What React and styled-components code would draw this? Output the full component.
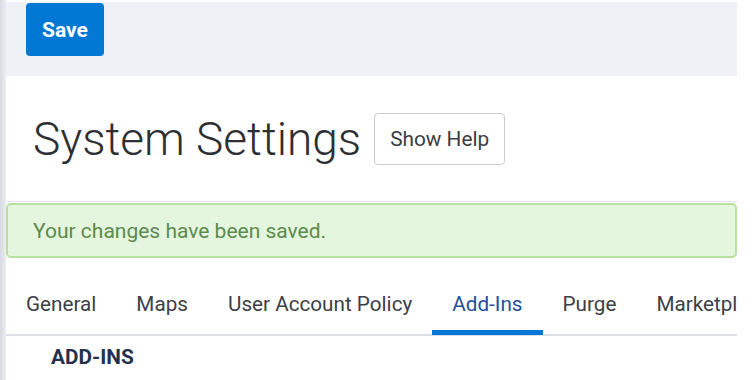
import React from 'react';
import styled, { createGlobalStyle } from 'styled-components';

const GlobalStyle = createGlobalStyle`
  body {
    margin: 0;
    background: #fff;
    font-family: Roboto, "Liberation Sans", sans-serif;
  }
`;

const Page = styled.div`
  display: flex;
  width: 755px;
  height: 380px;
  overflow: hidden;
`;

const SideEdge = styled.div`
  flex: 0 0 6px;
  background: linear-gradient(to right, #d6d9df, #eceef2);
`;

const Main = styled.div`
  width: 731px;
  display: flex;
  flex-direction: column;
  overflow: hidden;
`;

const Toolbar = styled.div`
  margin-top: 2px;
  height: 74px;
  background: #eef1f6;
  padding: 1px 0 0 20px;
  box-sizing: border-box;
`;

const PrimaryButton = styled.button`
  width: 78px;
  height: 53px;
  border: none;
  border-radius: 4px;
  background: #0078d4;
  color: #fff;
  font-family: Roboto, "Liberation Sans", sans-serif;
  font-weight: 700;
  font-size: 21px;
`;

const TitleRow = styled.div`
  display: flex;
  align-items: center;
  gap: 13px;
  height: 126px;
  padding-left: 27px;
  padding-top: 1px;
  box-sizing: border-box;
  border-bottom: 1px solid #e3e5e9;
`;

const Title = styled.h1`
  margin: 0;
  font-size: 46px;
  font-weight: 300;
  color: #2d2f33;
  line-height: 1;
`;

const OutlineButton = styled.button`
  width: 131px;
  height: 52px;
  background: #fff;
  border: 1px solid #c9ccd1;
  border-radius: 4px;
  font-family: Roboto, "Liberation Sans", sans-serif;
  font-size: 20.8px;
  color: #3a3d42;
`;

const Alert = styled.div`
  margin-top: 1px;
  height: 55px;
  box-sizing: border-box;
  background: #e4f6dd;
  border: 2px solid #b7e1a1;
  border-radius: 5px;
  padding-left: 25px;
  display: flex;
  align-items: center;
  font-size: 21px;
  color: #5c8a4e;
`;

const Tabs = styled.div`
  margin-top: 20px;
  display: flex;
  border-bottom: 2px solid #dde1e6;
`;

const Tab = styled.div`
  padding: 0 20px;
  height: 52px;
  display: flex;
  align-items: center;
  font-size: 20.7px;
  color: ${p => (p.$active ? '#24509b' : '#3d4046')};
  border-bottom: 5px solid ${p => (p.$active ? '#0078d4' : 'transparent')};
  margin-bottom: -1px;
  white-space: nowrap;
`;

const SectionTitle = styled.h2`
  margin: 9px 0 0 45px;
  font-size: 20.8px;
  font-weight: 700;
  color: #25324d;
`;

const tabs = ['General', 'Maps', 'User Account Policy', 'Add-Ins', 'Purge', 'Marketplace'];

export default function App() {
  return (
    <>
      <GlobalStyle />
      <Page>
        <SideEdge />
        <Main>
          <Toolbar>
            <PrimaryButton>Save</PrimaryButton>
          </Toolbar>
          <TitleRow>
            <Title>System Settings</Title>
            <OutlineButton>Show Help</OutlineButton>
          </TitleRow>
          <Alert>Your changes have been saved.</Alert>
          <Tabs>
            {tabs.map(t => (
              <Tab key={t} $active={t === 'Add-Ins'}>{t}</Tab>
            ))}
          </Tabs>
          <SectionTitle>ADD-INS</SectionTitle>
        </Main>
      </Page>
    </>
  );
}
